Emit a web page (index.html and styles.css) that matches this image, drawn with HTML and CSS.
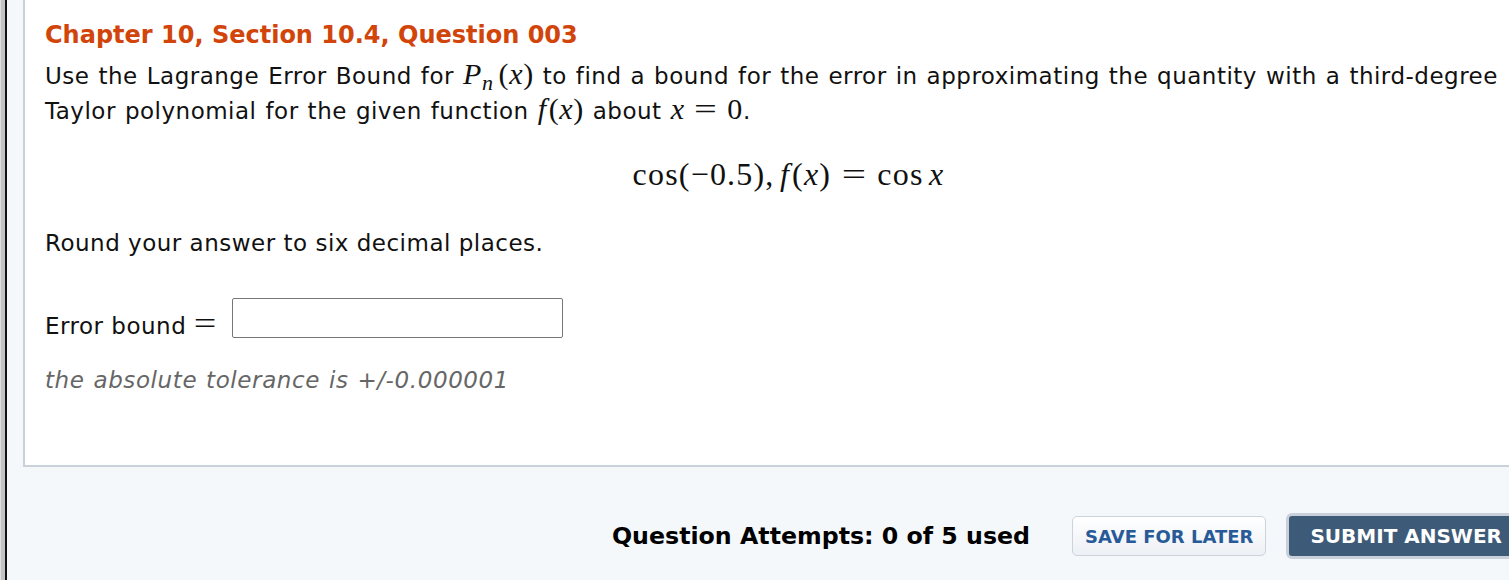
FILE: index.html
```html
<!DOCTYPE html>
<html>
<head>
<meta charset="utf-8">
<link rel="stylesheet" href="styles.css">
</head>
<body>
<div class="frame">
  <div class="rail"><div class="rail-gray"></div><div class="rail-dark"></div></div>
  <div class="content">
    <div class="panel">
      <h1 class="title">Chapter 10, Section 10.4, Question 003</h1>
      <p class="prompt">Use the Lagrange Error Bound for <span class="math"><i>P</i><sub><i>n</i></sub><span class="th"></span>(<i>x</i>)</span> to find a bound for the error in approximating the quantity with a third-degree<br>Taylor polynomial for the given function <span class="math"><i class="fi">f</i>(<i>x</i>)</span> about <span class="math"><i>x</i><span class="rel">=</span>0</span>.</p>
      <div class="display"><span class="math">cos(−0.5),<span class="th"></span><i class="fi">f</i>(<i>x</i>)<span class="rel">=</span>cos<span class="th"></span><i>x</i></span></div>
      <p class="instr">Round your answer to six decimal places.</p>
      <div class="answer">
        <span class="label">Error bound<span class="eq">=</span></span>
        <input class="field" type="text">
      </div>
      <p class="tol">the absolute tolerance is +/-0.000001</p>
    </div>
    <div class="actions">
      <span class="attempts">Question Attempts: 0 of 5 used</span>
      <button class="btn save">SAVE FOR LATER</button>
      <button class="btn submit">SUBMIT ANSWER</button>
    </div>
  </div>
</div>
</body>
</html>
```

FILE: styles.css
```css
html, body {
  margin: 0;
  padding: 0;
  background: #f5f8fb;
  overflow: hidden;
  width: 1509px;
  height: 580px;
}
body {
  font-family: "DejaVu Sans", Verdana, sans-serif;
  color: #111;
}
.frame {
  display: flex;
  height: 580px;
  width: 1540px;
}
.rail {
  display: flex;
  flex: none;
}
.rail-gray {
  width: 5px;
  background: #c3c3c3;
  border-left: 1px solid #e0e0e0;
  box-sizing: border-box;
}
.rail-dark {
  width: 2px;
  background: #111;
}
.content {
  flex: 1;
  padding-left: 16px;
  display: flex;
  flex-direction: column;
}
.panel {
  background: #fff;
  border-left: 2px solid #c9d1db;
  border-bottom: 2px solid #c9d1db;
  padding: 20px 0 0 20px;
  height: 445px;
}
.title {
  margin: 0;
  font-size: 24px;
  line-height: 30px;
  font-weight: bold;
  color: #d1450b;
}
.prompt {
  margin: 9px 0 0;
  font-size: 23px;
  letter-spacing: 0.5px;
  word-spacing: 1.2px;
  line-height: 34px;
  white-space: nowrap;
}
.math {
  font-family: "Liberation Serif", "Times New Roman", serif;
  font-size: 30px;
  line-height: 1;
  letter-spacing: 0.6px;
  word-spacing: 0;
}
.math i { font-style: italic; }
.math .fi { margin-right: 2px; }
.math sub {
  font-size: 22px;
  vertical-align: -6px;
  line-height: 1;
}
.th {
  display: inline-block;
  width: 0.17em;
}
.rel {
  display: inline-block;
  margin: 0 0.42em;
  transform: scaleX(1.35);
}
.display {
  text-align: center;
  margin: 26px 0 0;
  padding-right: 8px;
  height: 40px;
  line-height: 40px;
  font-family: "Liberation Serif", serif;
  font-size: 32px;
}
.display .math {
  font-size: 32px;
  line-height: 40px;
  letter-spacing: 1.2px;
}
.instr {
  margin: 32px 0 0;
  font-size: 23px;
  letter-spacing: 0.5px;
  line-height: 34px;
}
.answer {
  margin-top: 32px;
  display: flex;
  align-items: center;
  gap: 15px;
}
.label {
  font-size: 23px;
  letter-spacing: 0.5px;
  line-height: 34px;
  padding-top: 14px;
}
.eq {
  display: inline-block;
  font-family: "Liberation Serif", serif;
  font-size: 32px;
  margin: 0 2px 0 10px;
  transform: scaleX(1.25);
}
.field {
  width: 331px;
  height: 40px;
  box-sizing: border-box;
  border: 1px solid #777;
  border-radius: 2px;
  background: #fff;
  margin: 0;
}
.tol {
  margin: 20px 0 0;
  font-size: 23px;
  letter-spacing: 0.6px;
  word-spacing: 1px;
  line-height: 34px;
  font-style: italic;
  color: #666;
}
.actions {
  display: flex;
  align-items: center;
  justify-content: flex-end;
  height: 46px;
  margin-top: 46px;
  padding-right: 17px;
}
.attempts {
  font-size: 23.7px;
  font-weight: bold;
  color: #000;
  margin-right: 42px;
}
.btn {
  font-family: "DejaVu Sans", Verdana, sans-serif;
  font-weight: bold;
  cursor: pointer;
}
.save {
  height: 40px;
  padding: 0 12px;
  font-size: 18px;
  color: #285a98;
  background: linear-gradient(#ffffff, #edf0f4);
  border: 1px solid #cbd3dc;
  border-radius: 5px;
  margin-right: 20px;
}
.submit {
  height: 46px;
  padding: 0 18px 0 21px;
  font-size: 20px;
  color: #fff;
  background: #3d5a78;
  border: 3px solid #c8d0da;
  border-radius: 6px;
}
```
